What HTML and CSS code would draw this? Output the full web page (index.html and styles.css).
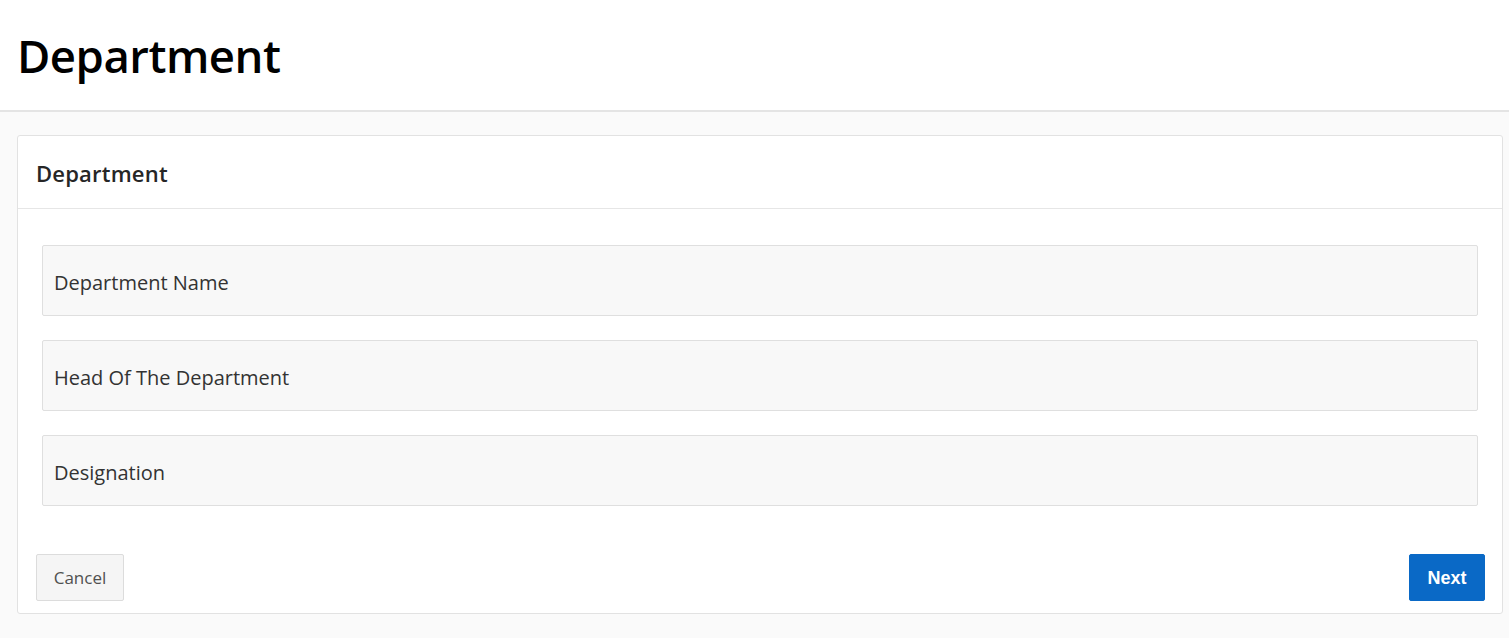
FILE: index.html
```html
<!DOCTYPE html>
<html>
<head>
  <title>Department</title>
  <meta charset="UTF-8">
  <link rel="stylesheet" href="styles.css">
</head>
<body>
  <header class="page-header">
    <h1>Department</h1>
  </header>

  <main class="page-body">
    <section class="card">
      <div class="card-header">
        <h2>Department</h2>
      </div>
      <div class="card-body">
        <div class="field"><span class="field-label">Department Name</span></div>
        <div class="field"><span class="field-label">Head Of The Department</span></div>
        <div class="field"><span class="field-label">Designation</span></div>
      </div>
      <div class="card-footer">
        <button class="btn btn-cancel">Cancel</button>
        <button class="btn btn-next">Next</button>
      </div>
    </section>
  </main>
</body>
</html>
```

FILE: styles.css
```css
body {
  margin: 0;
  background-color: #fafafa;
  font-family: 'Open Sans', 'Noto Sans', sans-serif;
  color: #333;
}

.page-header {
  background-color: #fff;
  height: 110px;
  border-bottom: 2px solid #e4e4e4;
  display: flex;
  align-items: center;
  padding-left: 17px;
}

.page-header h1 {
  margin: 0;
  font-size: 45.5px;
  font-weight: 600;
  color: #000;
  letter-spacing: -0.5px;
}

.page-body {
  padding: 23px 6px 24px 17px;
}

.card {
  background-color: #fff;
  border: 1px solid #e2e2e2;
  border-radius: 3px;
}

.card-header {
  height: 73px;
  border-bottom: 1px solid #e6e6e6;
  display: flex;
  align-items: center;
  padding-left: 18px;
  padding-top: 2px;
  box-sizing: border-box;
}

.card-header h2 {
  margin: 0;
  font-size: 22px;
  font-weight: 600;
  color: #262626;
  letter-spacing: 0.2px;
}

.card-body {
  padding: 36px 24px 24px 24px;
  display: flex;
  flex-direction: column;
  gap: 24px;
}

.field {
  height: 71px;
  background-color: #f8f8f8;
  border: 1px solid #dfdfdf;
  border-radius: 2px;
  display: flex;
  align-items: center;
  padding-left: 11px;
  padding-top: 3px;
  box-sizing: border-box;
}

.field-label {
  font-size: 20px;
  color: #333;
}

.card-footer {
  display: flex;
  justify-content: space-between;
  padding: 24px 17px 12px 18px;
}

.btn {
  height: 47px;
  border-radius: 2px;
  font-size: 16px;
  cursor: pointer;
}

.btn-cancel {
  background-color: #f5f5f5;
  border: 1px solid #dcdcdc;
  color: #505050;
  font-family: 'Open Sans', sans-serif;
  font-size: 17px;
  padding: 0 16px;
  width: 88px;
}

.btn-next {
  background-color: #0a69c6;
  border: 1px solid #0a69c6;
  color: #fff;
  font-family: 'Liberation Sans', Arial, sans-serif;
  font-weight: bold;
  width: 76px;
  padding: 0;
  padding-top: 2px;
  font-size: 18px;
}
```
